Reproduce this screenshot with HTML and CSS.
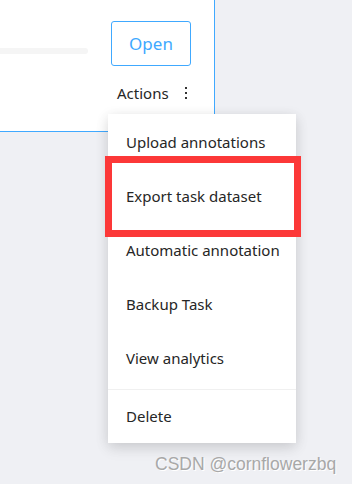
FILE: index.html
```html
<!DOCTYPE html>
<html lang="en">
<head>
    <meta charset="UTF-8">
    <title>Task actions</title>
    <link rel="stylesheet" href="styles.css">
</head>
<body>
    <div class="task-card">
        <div class="task-progress">
            <div class="progress-track"></div>
        </div>
        <div class="task-actions">
            <button class="open-button">Open</button>
            <div class="actions-toggle">
                <span>Actions</span>
                <span class="dots"><i></i><i></i><i></i></span>
            </div>
        </div>
    </div>

    <ul class="actions-menu">
        <li>Upload annotations</li>
        <li>Export task dataset</li>
        <li>Automatic annotation</li>
        <li>Backup Task</li>
        <li>View analytics</li>
        <li class="divider"></li>
        <li class="delete-item">Delete</li>
    </ul>

    <!-- highlight box drawn over the screenshot -->
    <div class="highlight"></div>

    <div class="watermark">CSDN @cornflowerzbq</div>
</body>
</html>
```

FILE: styles.css
```css
* {
    margin: 0;
    padding: 0;
    box-sizing: border-box;
}

body {
    width: 352px;
    height: 484px;
    overflow: hidden;
    background-color: #eff0f4;
    font-family: "Noto Sans", "Open Sans", sans-serif;
    color: #262626;
    position: relative;
}

.task-card {
    display: flex;
    width: 215px;
    height: 132px;
    background-color: #fff;
    border-right: 1px solid #40a9ff;
    border-bottom: 1px solid #40a9ff;
}

.task-progress {
    width: 88px;
    padding-top: 48px;
}

.progress-track {
    height: 6px;
    background-color: #f5f5f5;
    border-radius: 0 3px 3px 0;
}

.task-actions {
    display: flex;
    flex-direction: column;
    margin-left: 23px;
    padding-top: 21px;
}

.open-button {
    width: 80px;
    height: 45px;
    border: 1px solid #40a9ff;
    border-radius: 3px;
    background: #fff;
    color: #40a9ff;
    font-family: inherit;
    font-size: 17px;
}

.actions-toggle {
    display: flex;
    align-items: center;
    margin-top: 16px;
    margin-left: 6px;
    font-size: 15px;
    line-height: 22px;
}

.dots {
    display: flex;
    flex-direction: column;
    gap: 3px;
    margin-left: 16px;
}

.dots i {
    display: block;
    width: 2px;
    height: 2px;
    background-color: #333;
}

.actions-menu {
    position: absolute;
    left: 108px;
    top: 114px;
    width: 188px;
    list-style: none;
    background-color: #fff;
    box-shadow: 0 3px 12px rgba(0, 0, 0, 0.12), 0 6px 16px rgba(0, 0, 0, 0.06);
    padding-top: 1px;
}

.actions-menu li {
    height: 54px;
    line-height: 54px;
    padding-left: 18px;
    font-size: 15px;
    white-space: nowrap;
}

.actions-menu .divider {
    height: 1px;
    margin-top: 4px;
    background-color: #f0f0f0;
}

.actions-menu .delete-item {
    height: 53px;
    line-height: 53px;
}

.highlight {
    position: absolute;
    left: 105px;
    top: 156px;
    width: 196px;
    height: 81px;
    border: 7px solid #fc3838;
}

.watermark {
    position: absolute;
    left: 155px;
    top: 454px;
    font-family: "Liberation Sans", Arial, sans-serif;
    font-size: 17.5px;
    color: #a8a8a8;
    text-shadow: 1px 1px 0 #fff;
}
```
